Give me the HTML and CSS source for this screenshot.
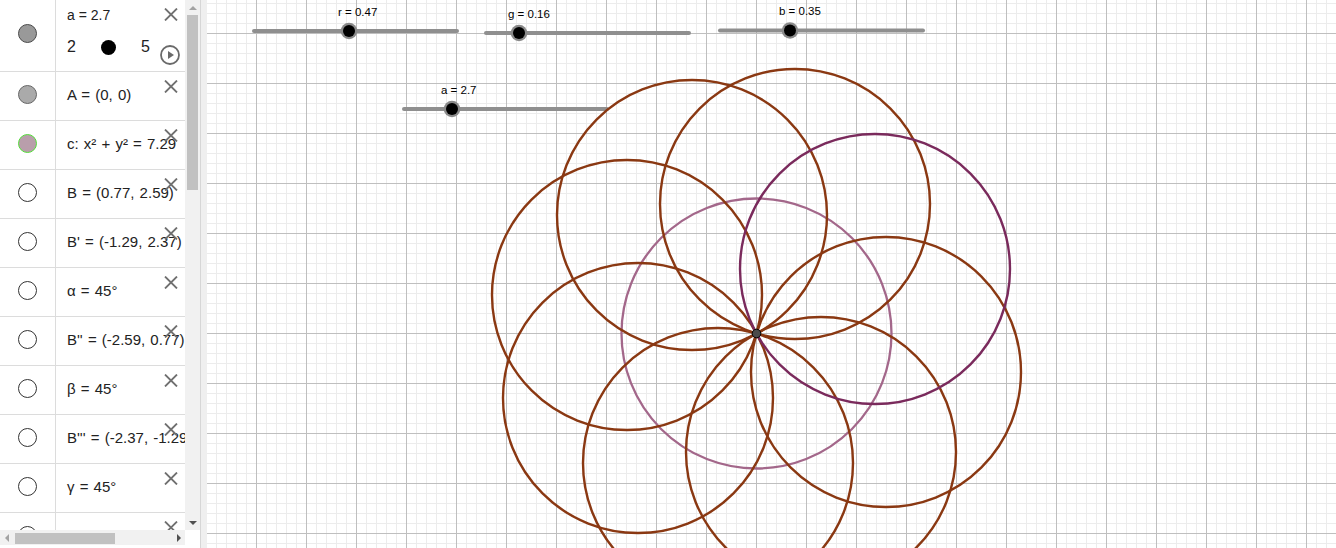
FILE: index.html
```html
<!DOCTYPE html>
<html lang="en">
<head>
<meta charset="utf-8">
<title>GeoGebra</title>
<link rel="stylesheet" href="styles.css">
</head>
<body>
<div class="app">
  <div class="algebra">
    <div class="algebra-main">
      <div class="list">
        <div class="row row-first">
          <div class="marker-cell"><span class="marker marker-dark"></span></div>
          <div class="content content-slider">
            <div class="slider-name">a = 2.7</div>
            <div class="slider-line"><span>2</span><span class="slider-dot"></span><span>5</span></div>
          </div>
          <svg class="del" viewBox="0 0 14 13"><path d="M1 0.5 L13 12.5 M13 0.5 L1 12.5"/></svg>
          <svg class="play" viewBox="0 0 20 20"><circle cx="10" cy="10" r="9"/><path d="M8 6 L14 10 L8 14 Z"/></svg>
        </div>
        <div class="row">
          <div class="marker-cell"><span class="marker marker-gray"></span></div>
          <div class="content">A = (0, 0)</div>
          <svg class="del" viewBox="0 0 14 13"><path d="M1 0.5 L13 12.5 M13 0.5 L1 12.5"/></svg>
        </div>
        <div class="row">
          <div class="marker-cell"><span class="marker marker-circle"></span></div>
          <div class="content">c: x² + y² = 7.29</div>
          <svg class="del" viewBox="0 0 14 13"><path d="M1 0.5 L13 12.5 M13 0.5 L1 12.5"/></svg>
        </div>
        <div class="row">
          <div class="marker-cell"><span class="marker marker-empty"></span></div>
          <div class="content">B = (0.77, 2.59)</div>
          <svg class="del" viewBox="0 0 14 13"><path d="M1 0.5 L13 12.5 M13 0.5 L1 12.5"/></svg>
        </div>
        <div class="row">
          <div class="marker-cell"><span class="marker marker-empty"></span></div>
          <div class="content">B' = (-1.29, 2.37)</div>
          <svg class="del" viewBox="0 0 14 13"><path d="M1 0.5 L13 12.5 M13 0.5 L1 12.5"/></svg>
        </div>
        <div class="row">
          <div class="marker-cell"><span class="marker marker-empty"></span></div>
          <div class="content">α = 45°</div>
          <svg class="del" viewBox="0 0 14 13"><path d="M1 0.5 L13 12.5 M13 0.5 L1 12.5"/></svg>
        </div>
        <div class="row">
          <div class="marker-cell"><span class="marker marker-empty"></span></div>
          <div class="content">B'' = (-2.59, 0.77)</div>
          <svg class="del" viewBox="0 0 14 13"><path d="M1 0.5 L13 12.5 M13 0.5 L1 12.5"/></svg>
        </div>
        <div class="row">
          <div class="marker-cell"><span class="marker marker-empty"></span></div>
          <div class="content">β = 45°</div>
          <svg class="del" viewBox="0 0 14 13"><path d="M1 0.5 L13 12.5 M13 0.5 L1 12.5"/></svg>
        </div>
        <div class="row">
          <div class="marker-cell"><span class="marker marker-empty"></span></div>
          <div class="content">B''' = (-2.37, -1.29)</div>
          <svg class="del" viewBox="0 0 14 13"><path d="M1 0.5 L13 12.5 M13 0.5 L1 12.5"/></svg>
        </div>
        <div class="row">
          <div class="marker-cell"><span class="marker marker-empty"></span></div>
          <div class="content">γ = 45°</div>
          <svg class="del" viewBox="0 0 14 13"><path d="M1 0.5 L13 12.5 M13 0.5 L1 12.5"/></svg>
        </div>
        <div class="row">
          <div class="marker-cell"><span class="marker marker-empty"></span></div>
          <div class="content">B'''' = (-0.77, -2.59)</div>
          <svg class="del" viewBox="0 0 14 13"><path d="M1 0.5 L13 12.5 M13 0.5 L1 12.5"/></svg>
        </div>
      </div>
      <div class="vscroll">
        <div class="arrow-btn"><span class="tri tri-up tri-off"></span></div>
        <div class="vtrack"><div class="vthumb"></div></div>
        <div class="arrow-btn"><span class="tri tri-down"></span></div>
      </div>
    </div>
    <div class="hbar">
      <div class="hscroll">
        <div class="harrow"><span class="tri tri-left tri-off"></span></div>
        <div class="htrack"><div class="hthumb"></div></div>
        <div class="harrow"><span class="tri tri-right"></span></div>
      </div>
      <div class="corner"></div>
    </div>
  </div>
  <div class="splitter"></div>
  <div class="graphics">
    <svg class="canvas" width="1129" height="548" viewBox="0 0 1129 548">
      <defs>
        <pattern id="minor" width="10" height="10" x="9" y="3" patternUnits="userSpaceOnUse">
          <rect x="0" y="0" width="1" height="10" fill="#ececec"/>
          <rect x="0" y="0" width="10" height="1" fill="#ececec"/>
        </pattern>
        <pattern id="major" width="50" height="50" x="49" y="33" patternUnits="userSpaceOnUse">
          <rect x="0" y="0" width="1" height="50" fill="#bfbfbf"/>
          <rect x="0" y="0" width="50" height="1" fill="#bfbfbf"/>
        </pattern>
      </defs>
      <rect width="1129" height="548" fill="#fff"/>
      <rect width="1129" height="548" fill="url(#minor)"/>
      <rect width="1129" height="548" fill="url(#major)"/>

      <g class="sliders">
        <line class="s-line" x1="47" y1="31" x2="250" y2="31"/>
        <circle class="s-ring" cx="142" cy="31" r="8.3"/>
        <circle class="s-dot" cx="142" cy="31" r="6"/>
        <text class="s-label" x="131" y="16">r = 0.47</text>

        <line class="s-line" x1="279" y1="33" x2="482" y2="33"/>
        <circle class="s-ring" cx="312" cy="33" r="8.3"/>
        <circle class="s-dot" cx="312" cy="33" r="6"/>
        <text class="s-label" x="301" y="18">g = 0.16</text>

        <line class="s-line" x1="513" y1="30.5" x2="716" y2="30.5"/>
        <circle class="s-ring" cx="583" cy="30.5" r="8.3"/>
        <circle class="s-dot" cx="583" cy="30.5" r="6"/>
        <text class="s-label" x="572" y="14.5">b = 0.35</text>

        <line class="s-line" x1="197" y1="109" x2="400" y2="109"/>
        <circle class="s-ring" cx="245" cy="109" r="8.3"/>
        <circle class="s-dot" cx="245" cy="109" r="6"/>
        <text class="s-label" x="234" y="94">a = 2.7</text>
      </g>

      <g transform="translate(549.5 333.5)">
        <circle class="c-base" cx="0" cy="0" r="135"/>
        <circle class="c-brown" cx="38.5" cy="-129.5" r="135"/>
        <circle class="c-brown" cx="-64.5" cy="-118.5" r="135"/>
        <circle class="c-brown" cx="-129.5" cy="-38.5" r="135"/>
        <circle class="c-brown" cx="-118.5" cy="64.5" r="135"/>
        <circle class="c-brown" cx="-38.5" cy="129.5" r="135"/>
        <circle class="c-brown" cx="64.5" cy="118.5" r="135"/>
        <circle class="c-brown" cx="129.5" cy="38.5" r="135"/>
        <circle class="c-purple" cx="118.5" cy="-64.5" r="135"/>
        <circle class="pt" cx="0" cy="0" r="4.3"/>
      </g>
    </svg>
  </div>
</div>
</body>
</html>
```

FILE: styles.css
```css
html, body {
  margin: 0;
  padding: 0;
  background: #fff;
  overflow: hidden;
}

.app {
  display: flex;
  width: 1336px;
  height: 548px;
  font-family: "Liberation Sans", Arial, sans-serif;
  color: #222;
}

.algebra {
  width: 200px;
  flex: none;
  display: flex;
  flex-direction: column;
  background: #fff;
}

.algebra-main {
  height: 530px;
  display: flex;
}

.list {
  width: 185px;
  height: 530px;
  overflow: hidden;
}

.row {
  position: relative;
  display: flex;
  height: 49px;
  box-sizing: border-box;
  border-bottom: 1px solid #dcdcdc;
}

.row-first {
  height: 72px;
}

.marker-cell {
  width: 56px;
  flex: none;
  box-sizing: border-box;
  border-right: 1px solid #dcdcdc;
  display: flex;
  align-items: center;
  justify-content: center;
  padding-bottom: 3px;
}

.row-first .marker-cell {
  padding-bottom: 5px;
}

.marker {
  width: 19px;
  height: 19px;
  border-radius: 50%;
  box-sizing: border-box;
  display: block;
}

.marker-dark {
  background: #999;
  border: 1px solid #4a4a4a;
}

.marker-gray {
  background: #aaa;
  border: 1px solid #666;
}

.marker-circle {
  background: #b99eab;
  border: 1.5px solid #55dd3c;
}

.marker-empty {
  background: #fff;
  border: 1.5px solid #333;
}

.content {
  flex: 1;
  min-width: 0;
  padding-left: 11px;
  padding-bottom: 3px;
  display: flex;
  align-items: center;
  white-space: nowrap;
  overflow: hidden;
  font-size: 15px;
  word-spacing: 1px;
}

.content-slider {
  flex-direction: column;
  align-items: flex-start;
  justify-content: flex-start;
  padding-top: 5px;
  padding-bottom: 0;
  word-spacing: 0;
}

.slider-name {
  font-size: 14px;
  line-height: 20px;
  height: 20px;
}

.slider-line {
  margin-top: 10px;
  height: 24px;
  display: flex;
  align-items: center;
  gap: 25px;
  font-size: 16px;
}

.slider-dot {
  width: 15px;
  height: 15px;
  border-radius: 50%;
  background: #000;
  display: block;
}

.del {
  position: absolute;
  left: 164px;
  top: 8px;
  width: 14px;
  height: 13px;
}

.del path {
  stroke: #707070;
  stroke-width: 1.8;
  fill: none;
}

.play {
  position: absolute;
  left: 160px;
  top: 45px;
  width: 20px;
  height: 20px;
}

.play circle {
  fill: none;
  stroke: #6a6a6a;
  stroke-width: 1.8;
}

.play path {
  fill: #6a6a6a;
}

.vscroll {
  width: 15px;
  height: 530px;
  background: #f1f1f1;
  display: flex;
  flex-direction: column;
}

.arrow-btn {
  height: 15px;
  display: flex;
  align-items: center;
  justify-content: center;
}

.vtrack {
  flex: 1;
  padding-left: 2px;
}

.vthumb {
  width: 11px;
  height: 175px;
  background: #c1c1c1;
}

.hbar {
  display: flex;
  height: 18px;
}

.hscroll {
  width: 185px;
  height: 15px;
  background: #f1f1f1;
  display: flex;
}

.corner {
  flex: 1;
  background: #fff;
}

.harrow {
  width: 13px;
  display: flex;
  align-items: center;
  justify-content: center;
}

.htrack {
  flex: 1;
  padding-top: 3px;
  padding-left: 2px;
}

.hthumb {
  width: 100px;
  height: 11px;
  background: #c1c1c1;
}

.tri {
  display: block;
  width: 0;
  height: 0;
  border-style: solid;
  border-color: transparent;
}

.tri-up {
  border-width: 0 4px 4px 4px;
  border-bottom-color: #505050;
}

.tri-down {
  border-width: 4px 4px 0 4px;
  border-top-color: #505050;
}

.tri-left {
  border-width: 4px 4px 4px 0;
  border-right-color: #505050;
}

.tri-right {
  border-width: 4px 0 4px 4px;
  border-left-color: #505050;
}

.tri-up.tri-off {
  border-bottom-color: #a3a3a3;
}

.tri-left.tri-off {
  border-right-color: #a3a3a3;
}

.splitter {
  width: 6px;
  flex: none;
  background: #efefef;
  border-left: 1px solid #d6d6d6;
  box-sizing: content-box;
}

.graphics {
  flex: 1;
  overflow: hidden;
}

.canvas {
  display: block;
}

.s-line {
  stroke: #8f8f8f;
  stroke-width: 4;
  stroke-linecap: round;
}

.s-ring {
  fill: #8a8a8a;
}

.s-dot {
  fill: #000;
}

.s-label {
  font-family: "Liberation Sans", Arial, sans-serif;
  font-size: 11.5px;
  fill: #000;
}

.c-base {
  fill: none;
  stroke: #a3678a;
  stroke-width: 2.3;
}

.c-brown {
  fill: none;
  stroke: #8a3812;
  stroke-width: 2.4;
}

.c-purple {
  fill: none;
  stroke: #7a2a5c;
  stroke-width: 2.4;
}

.pt {
  fill: #4a4a4a;
  stroke: #000;
  stroke-width: 1;
}
```
